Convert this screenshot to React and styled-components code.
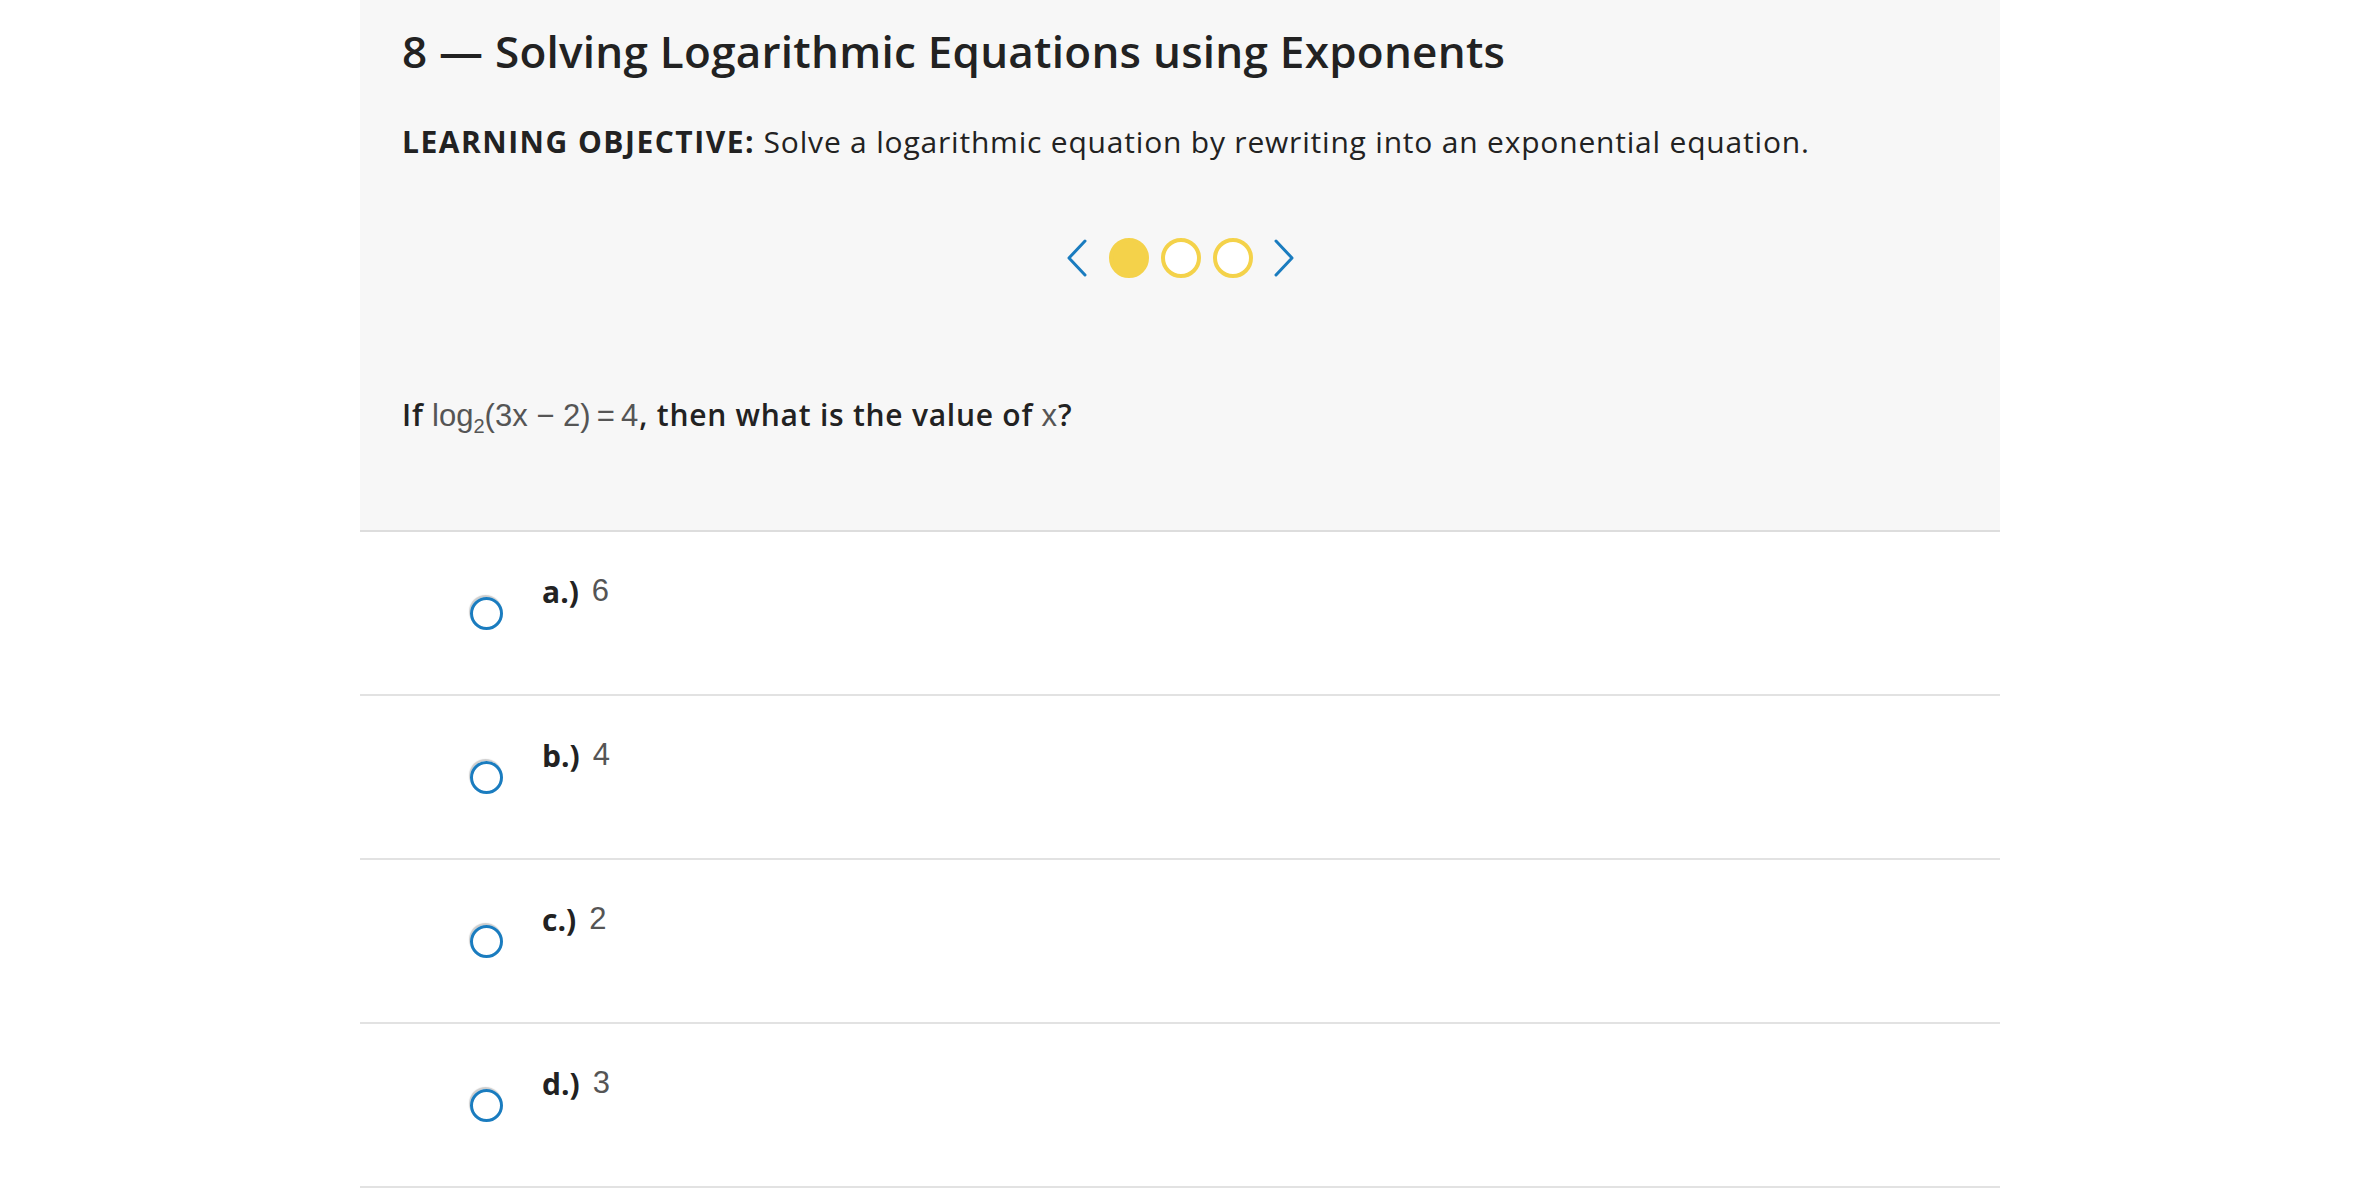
import React from 'react';
import styled, { createGlobalStyle } from 'styled-components';

const GlobalStyle = createGlobalStyle`
  html, body {
    margin: 0;
    padding: 0;
    background: #ffffff;
  }
  body {
    font-family: "Open Sans", Lato, sans-serif;
    color: #222222;
  }
`

const Page = styled.main`
  width: 1640px;
  margin: 0 auto;
`

const QuestionCard = styled.section`
  background: #f7f7f7;
  border-bottom: 2px solid #dddddd;
  padding: 25px 42px 96px;
`

const Title = styled.h1`
  margin: 0;
  font-size: 44px;
  line-height: 52px;
  font-weight: 600;
  letter-spacing: 0.25px;
`

const Objective = styled.p`
  margin: 47px 0 0;
  font-size: 30px;
  line-height: 36px;
  font-weight: 400;
  letter-spacing: 0.8px;
  & > b {
    font-weight: 700;
    letter-spacing: 1.5px;
  }
`

const Pager = styled.nav`
  margin-top: 78px;
  display: flex;
  justify-content: center;
  align-items: center;
`

const Dots = styled.div`
  display: flex;
  gap: 12px;
  margin: 0 21px 0 22px;
`

const Dot = styled.span`
  box-sizing: border-box;
  width: 40px;
  height: 40px;
  border-radius: 50%;
  border: 4px solid #f4d24a;
  background: ${p => (p.$active ? '#f4d24a' : '#ffffff')};
`

const Prompt = styled.p`
  margin: 119px 0 0;
  font-size: 30px;
  line-height: 36px;
  font-weight: 600;
  letter-spacing: 0.75px;
`

const Math = styled.span`
  font-family: "Liberation Sans", Arial, sans-serif;
  font-weight: 400;
  font-size: 31px;
  letter-spacing: 0;
  color: #555555;
  margin-right: 1px;
  & > sub {
    font-size: 20px;
    line-height: 0;
  }
`

const Options = styled.ul`
  list-style: none;
  margin: 0;
  padding: 0;
`

const Option = styled.li`
  box-sizing: border-box;
  height: 164px;
  border-bottom: 2px solid #e2e2e2;
  padding-left: 110px;
  display: flex;
  align-items: center;
`

const Radio = styled.span`
  box-sizing: border-box;
  flex: none;
  width: 33px;
  height: 33px;
  border-radius: 50%;
  border: 3px solid #1a7cbf;
  box-shadow: -1px -2px 1px rgba(110, 110, 110, 0.35);
`

const OptionText = styled.div`
  margin: 0 0 43px 39px;
  font-size: 30px;
  line-height: 36px;
`

const Letter = styled.b`
  font-weight: 700;
`

const Value = styled.span`
  margin-left: 13px;
  font-family: "Liberation Sans", Arial, sans-serif;
  font-size: 31px;
  color: #555555;
  vertical-align: 2px;
`

function Chevron({ dir }) {
  const d = dir === 'left' ? 'M18 2 L2 19 L18 36' : 'M2 2 L18 19 L2 36';
  return (
    <svg width="20" height="38" viewBox="0 0 20 38" aria-hidden="true">
      <path d={d} fill="none" stroke="#1a7cbf" strokeWidth="3" strokeLinecap="round" strokeLinejoin="round" />
    </svg>
  );
}

const answers = [
  { letter: 'a', value: '6' },
  { letter: 'b', value: '4' },
  { letter: 'c', value: '2' },
  { letter: 'd', value: '3' },
];

export default function App() {
  return (
    <>
      <GlobalStyle />
      <Page>
        <QuestionCard>
          <Title>8 — Solving Logarithmic Equations using Exponents</Title>
          <Objective>
            <b>LEARNING OBJECTIVE:</b> Solve a logarithmic equation by rewriting into an exponential equation.
          </Objective>
          <Pager>
            <Chevron dir="left" />
            <Dots>
              <Dot $active />
              <Dot />
              <Dot />
            </Dots>
            <Chevron dir="right" />
          </Pager>
          <Prompt>
            If <Math>log<sub>2</sub>(3x − 2){'\u2009'}={'\u2009'}4</Math>, then what is the value of <Math>x</Math>?
          </Prompt>
        </QuestionCard>
        <Options>
          {answers.map(a => (
            <Option key={a.letter}>
              <Radio />
              <OptionText>
                <Letter>{a.letter}.)</Letter>
                <Value>{a.value}</Value>
              </OptionText>
            </Option>
          ))}
        </Options>
      </Page>
    </>
  );
}
